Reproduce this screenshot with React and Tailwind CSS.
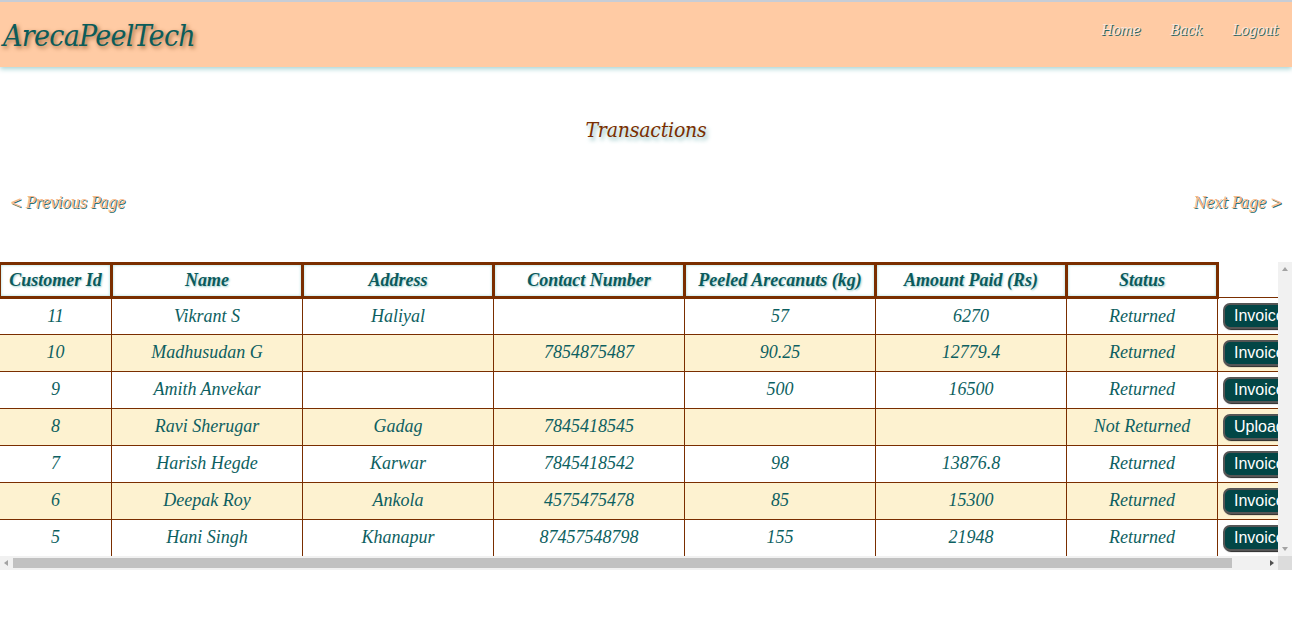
import React from "react";

const rows = [
  { id: 11, name: "Vikrant S", address: "Haliyal", contact: "", peeled: "57", amount: "6270", status: "Returned" },
  { id: 10, name: "Madhusudan G", address: "", contact: "7854875487", peeled: "90.25", amount: "12779.4", status: "Returned" },
  { id: 9, name: "Amith Anvekar", address: "", contact: "", peeled: "500", amount: "16500", status: "Returned" },
  { id: 8, name: "Ravi Sherugar", address: "Gadag", contact: "7845418545", peeled: "", amount: "", status: "Not Returned" },
  { id: 7, name: "Harish Hegde", address: "Karwar", contact: "7845418542", peeled: "98", amount: "13876.8", status: "Returned" },
  { id: 6, name: "Deepak Roy", address: "Ankola", contact: "4575475478", peeled: "85", amount: "15300", status: "Returned" },
  { id: 5, name: "Hani Singh", address: "Khanapur", contact: "87457548798", peeled: "155", amount: "21948", status: "Returned" },
];

const headers = ["Customer Id", "Name", "Address", "Contact Number", "Peeled Arecanuts (kg)", "Amount Paid (Rs)", "Status"];

const NavLink = ({ children }) => (
  <a className="text-[15px] italic text-[#fbe6d8] [text-shadow:1px_1px_0_#2b6464] font-['DejaVu_Serif_Condensed','DejaVu_Serif',serif] tracking-[-0.4px]">
    {children}
  </a>
);

const PageLink = ({ children }) => (
  <a className="text-[16px] italic text-[#f6b98c] [text-shadow:1px_1px_0_#2d7272] font-['DejaVu_Serif_Condensed','DejaVu_Serif',serif] tracking-[-0.3px]">
    {children}
  </a>
);

// small scrollbar arrows
const Arrow = ({ dir, dark }) => {
  const pts = {
    up: "1,6 4,2 7,6",
    down: "1,2 4,6 7,2",
    left: "6,1 2,4 6,7",
    right: "2,1 6,4 2,7",
  }[dir];
  return (
    <svg width="8" height="8" viewBox="0 0 8 8">
      <polygon points={pts} fill={dark ? "#505050" : "#a3a3a3"} />
    </svg>
  );
};

export default function App() {
  return (
    <div className="min-h-screen bg-white font-['Liberation_Serif',serif]">
      {/* Header */}
      <header className="h-[67px] bg-[#ffcba4] border-t-2 border-[#c7cdd6] shadow-[0_2px_5px_#a8d4d4] flex items-center justify-between pl-[3px] pr-[14px]">
        <h1 className="text-[30px] italic text-[#0b5c5a] [text-shadow:2px_2px_4px_#a0673c] font-['DejaVu_Serif_Condensed','DejaVu_Serif',serif] tracking-[-0.7px] mt-[1px]">
          ArecaPeelTech
        </h1>
        <nav className="flex items-center gap-[30px] mt-[-8px]">
          <NavLink>Home</NavLink>
          <NavLink>Back</NavLink>
          <NavLink>Logout</NavLink>
        </nav>
      </header>

      {/* Title */}
      <h2 className="mt-[48px] text-center text-[21px] italic text-[#7a2e00] [text-shadow:2px_3px_4px_#7fb8b8] font-['DejaVu_Serif_Condensed','DejaVu_Serif',serif] tracking-[-0.2px]">
        Transactions
      </h2>

      {/* Pager */}
      <div className="mt-[44px] flex justify-between px-[10px]">
        <PageLink>&lt; Previous Page</PageLink>
        <PageLink>Next Page &gt;</PageLink>
      </div>

      {/* Table with scrollbars */}
      <div className="mt-[47px] flex flex-col">
        <div className="flex h-[294px]">
          <div className="flex-1 overflow-hidden">
            <table className="table-fixed w-[1356px] -ml-[2px] border-collapse text-[18px] italic text-[#0d5f61] whitespace-nowrap">
              <colgroup>
                <col className="w-[112px]" />
                <col className="w-[191px]" />
                <col className="w-[191px]" />
                <col className="w-[191px]" />
                <col className="w-[191px]" />
                <col className="w-[191px]" />
                <col className="w-[151px]" />
                <col className="w-[138px]" />
              </colgroup>
              <thead>
                <tr className="h-[34px]">
                  {headers.map((h) => (
                    <th
                      key={h}
                      className="border-[3px] border-[#7a2e00] font-bold text-[#0b5a5c] shadow-[inset_0_0_3px_#9fd6d6] [text-shadow:1px_1px_2px_#9ccfcf] px-1 overflow-hidden"
                    >
                      {h}
                    </th>
                  ))}
                  <th></th>
                </tr>
              </thead>
              <tbody>
                {rows.map((r, i) => (
                  <tr key={r.id} className={`h-[37px] ${i % 2 === 1 ? "bg-[#fdf2d0]" : "bg-white"}`}>
                    <td className="border border-[#7a2e00] text-center">{r.id}</td>
                    <td className="border border-[#7a2e00] text-center">{r.name}</td>
                    <td className="border border-[#7a2e00] text-center">{r.address}</td>
                    <td className="border border-[#7a2e00] text-center">{r.contact}</td>
                    <td className="border border-[#7a2e00] text-center">{r.peeled}</td>
                    <td className="border border-[#7a2e00] text-center">{r.amount}</td>
                    <td className="border border-[#7a2e00] text-center">{r.status}</td>
                    <td className="border-y border-[#7a2e00] pl-[5px] not-italic">
                      <button className="h-[26px] px-[9px] rounded-[7px] bg-[#024646] text-white text-[16px] leading-none font-['Liberation_Sans',sans-serif] border-2 border-[#555] shadow-[1px_1px_1px_#222]">
                        {r.status === "Returned" ? "Invoice" : "Upload Invoice"}
                      </button>
                    </td>
                  </tr>
                ))}
              </tbody>
            </table>
          </div>
          <div className="w-[14px] bg-[#f1f1f1] flex flex-col items-center justify-between py-[3px]">
            <Arrow dir="up" />
            <Arrow dir="down" />
          </div>
        </div>
        <div className="flex h-[14px]">
          <div className="flex-1 bg-[#f1f1f1] flex items-center gap-[3px] px-[2px]">
            <Arrow dir="left" />
            <div className="w-[1219px] h-[10px] bg-[#c1c1c1]" />
            <div className="flex-1" />
            <Arrow dir="right" dark />
          </div>
          <div className="w-[14px] bg-[#dcdcdc]" />
        </div>
      </div>
    </div>
  );
}
